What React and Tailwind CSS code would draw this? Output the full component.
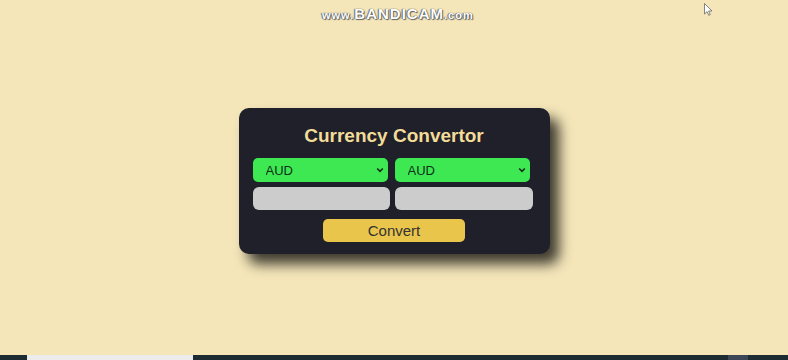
import React, { useState } from "react";

const currencies = ["AUD", "USD", "EUR", "INR", "GBP", "JPY"];

const Chevron = () => (
  <svg
    className="pointer-events-none absolute right-[4px] top-1/2 -translate-y-1/2"
    width="8"
    height="6"
    viewBox="0 0 8 6"
    fill="none"
  >
    <path d="M1.2 1.5L4 4.3 6.8 1.5" stroke="#1a2a1a" strokeWidth="1.6" />
  </svg>
);

const CurrencySelect = ({ value, onChange }) => (
  <div className="relative w-[135px]">
    <select
      value={value}
      onChange={(e) => onChange(e.target.value)}
      className="h-[24px] w-full appearance-none rounded-[5px] bg-[#3de853] pl-[13px] text-[13px] text-[#10301a] outline-none"
    >
      {currencies.map((c) => (
        <option key={c}>{c}</option>
      ))}
    </select>
    <Chevron />
  </div>
);

const App = () => {
  const [from, setFrom] = useState("AUD");
  const [to, setTo] = useState("AUD");
  const [amount, setAmount] = useState("");
  const [result, setResult] = useState("");

  return (
    <div className="relative flex h-[360px] w-full flex-col bg-[#f4e6b9] font-['Liberation_Sans',Arial,sans-serif]">
      <div className="absolute left-[322px] top-[3px] flex items-baseline font-bold tracking-[1px] text-white [text-shadow:0_0_1px_#444,1px_1px_1px_#666,-1px_0_1px_#777]">
        <span className="text-[11px]">www.</span>
        <span className="text-[15px]">BANDICAM</span>
        <span className="text-[11px]">.com</span>
      </div>
      <svg
        className="absolute left-[704px] top-[3px]"
        width="9"
        height="13"
        viewBox="0 0 9 13"
      >
        <path
          d="M0.5 0.5V11L3 8.6 4.8 12.3 6.3 11.6 4.6 8H8Z"
          fill="#fff"
          stroke="#666"
          strokeWidth="0.8"
        />
      </svg>

      <div className="flex flex-1 items-center justify-center">
        <div className="mt-[7px] w-[311px] rounded-[10px] bg-[#1f2029] px-[14px] pb-[12px] pt-[16px] shadow-[9px_10px_13px_rgba(0,0,0,0.75)]">
          <h1 className="mb-[10px] text-center text-[19px] font-bold leading-[24px] text-[#f3dc98]">
            Currency Convertor
          </h1>
          <div className="flex gap-[7px]">
            <CurrencySelect value={from} onChange={setFrom} />
            <CurrencySelect value={to} onChange={setTo} />
          </div>
          <div className="mt-[5px] flex gap-[5px]">
            <input
              value={amount}
              onChange={(e) => setAmount(e.target.value)}
              className="h-[23px] w-[137px] rounded-[6px] bg-[#cccccc] px-2 text-[13px] outline-none"
            />
            <input
              value={result}
              onChange={(e) => setResult(e.target.value)}
              className="h-[23px] w-[138px] rounded-[6px] bg-[#cccccc] px-2 text-[13px] outline-none"
            />
          </div>
          <div className="mt-[9px] flex justify-center">
            <button
              onClick={() => setResult(amount)}
              className="h-[23px] w-[142px] rounded-[5px] bg-[#eac54b] text-[15px] leading-[23px] text-[#333333]"
            >
              Convert
            </button>
          </div>
        </div>
      </div>

      <div className="flex h-[5px] w-full bg-[#1d2c30]">
        <div className="ml-[27px] w-[166px] bg-[#ececec]" />
        <div className="ml-auto mr-[40px] w-[20px] bg-[#3c4656]" />
      </div>
    </div>
  );
};

export default App;
